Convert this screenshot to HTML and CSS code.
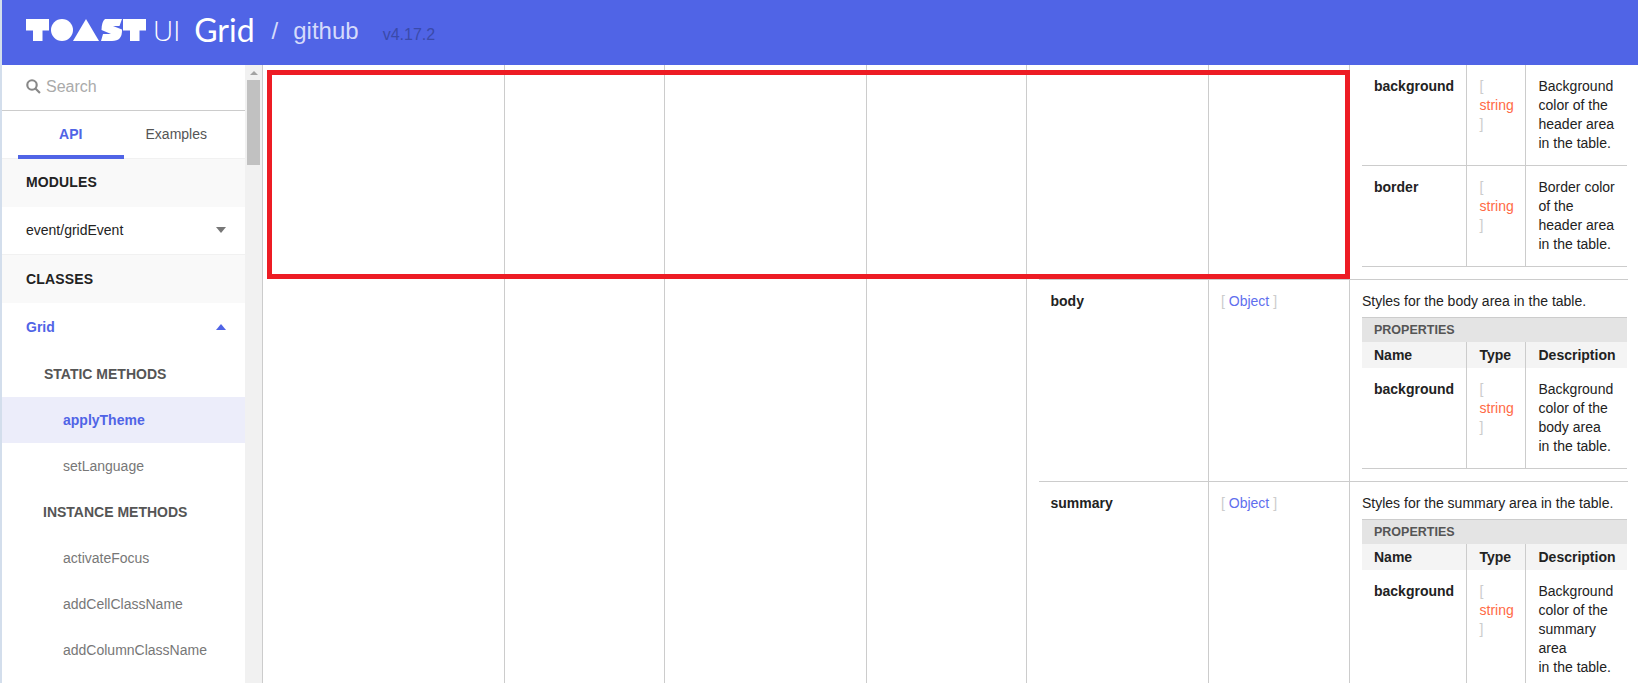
FILE: index.html
```html
<!DOCTYPE html>
<html lang="en">
<head>
<meta charset="utf-8">
<title>TOAST UI Grid</title>
<link rel="stylesheet" href="styles.css">
</head>
<body>
<div class="page">
  <header class="topbar">
    <svg class="logo" viewBox="0 0 120 22" aria-label="TOAST"><path d="M0 0H23V11.500H16.500V22H7V11.500H0Z"/><circle cx="36" cy="11" r="11"/><path d="M47 22L60 0L73 22Z"/><path d="M79 0H96L93.500 7H87L96 10.500Q96.500 22 86 22H75L77 15H85L75.500 11Q75.500 3 79 0Z"/><path d="M97 0H120V11.500H113.500V22H104V11.500H97Z"/></svg>
    <span class="ui">UI</span>
    <span class="grid-name">Grid</span>
    <span class="slash">/</span>
    <span class="repo">github</span>
    <span class="version">v4.17.2</span>
  </header>
  <div class="body">
    <aside class="sidebar">
      <div class="side-panel">
        <div class="search">
          <svg class="search-icon" viewBox="0 0 14 14"><circle cx="5.600" cy="5.600" r="4.400"/><path d="M8.800 8.800L13 13"/></svg>
          <span>Search</span>
        </div>
        <nav class="tabs"><span class="tab active">API</span><span class="tab">Examples</span></nav>
        <div class="section">MODULES</div>
        <div class="module">event/gridEvent<i class="caret down"></i></div>
        <div class="section">CLASSES</div>
        <div class="module current">Grid<i class="caret up"></i></div>
        <div class="group first">STATIC METHODS</div>
        <div class="method selected">applyTheme</div>
        <div class="method">setLanguage</div>
        <div class="group">INSTANCE METHODS</div>
        <div class="method">activateFocus</div>
        <div class="method">addCellClassName</div>
        <div class="method">addColumnClassName</div>
      </div>
      <div class="scrollbar"><span class="arrow"></span><span class="thumb"></span></div>
    </aside>
    <main class="content">
      <div class="highlight"></div>
      <table class="outer">
        <colgroup><col class="c1"><col class="c2"><col class="c3"><col class="c4"><col></colgroup>
        <tr>
          <td></td><td></td><td></td><td></td>
          <td class="wrap">
            <table class="params">
              <colgroup><col class="p-name"><col class="p-type"><col></colgroup>
              <tr class="top-row">
                <td></td><td></td>
                <td class="desc">
                  <table class="props">
                    <colgroup><col class="i-name"><col class="i-type"><col></colgroup>
                    <tr><td class="name">background</td><td class="type"><span class="br">[</span> <span class="str">string</span> <span class="br">]</span></td><td>Background color of the header area<br>in the table.</td></tr>
                    <tr><td class="name">border</td><td class="type"><span class="br">[</span> <span class="str">string</span> <span class="br">]</span></td><td>Border color of the<br>header area<br>in the table.</td></tr>
                  </table>
                </td>
              </tr>
              <tr class="body-row">
                <td class="name">body</td>
                <td class="obj"><span class="br">[</span> <span class="link">Object</span> <span class="br">]</span></td>
                <td class="desc">
                  <p>Styles for the body area in the table.</p>
                  <table class="props">
                    <colgroup><col class="i-name"><col class="i-type"><col></colgroup>
                    <tr class="caption"><th colspan="3">PROPERTIES</th></tr>
                    <tr class="head"><th>Name</th><th>Type</th><th>Description</th></tr>
                    <tr><td class="name">background</td><td class="type"><span class="br">[</span> <span class="str">string</span> <span class="br">]</span></td><td>Background color of the body area<br>in the table.</td></tr>
                  </table>
                </td>
              </tr>
              <tr class="body-row">
                <td class="name">summary</td>
                <td class="obj"><span class="br">[</span> <span class="link">Object</span> <span class="br">]</span></td>
                <td class="desc">
                  <p>Styles for the summary area in the table.</p>
                  <table class="props">
                    <colgroup><col class="i-name"><col class="i-type"><col></colgroup>
                    <tr class="caption"><th colspan="3">PROPERTIES</th></tr>
                    <tr class="head"><th>Name</th><th>Type</th><th>Description</th></tr>
                    <tr><td class="name">background</td><td class="type"><span class="br">[</span> <span class="str">string</span> <span class="br">]</span></td><td>Background color of the summary area<br>in the table.</td></tr>
                  </table>
                </td>
              </tr>
            </table>
          </td>
        </tr>
      </table>
    </main>
  </div>
</div>
</body>
</html>
```
FILE: styles.css
```css
* { box-sizing: border-box; }
html, body { margin: 0; height: 100%; overflow: hidden; }
body { font-family: "Liberation Sans", Arial, sans-serif; font-size: 14px; color: #222; background: #fff; }
.page { height: 683px; border-left: 2px solid #d3deec; display: flex; flex-direction: column; }

.topbar { height: 65px; flex: none; background: #5064e6; display: flex; align-items: center; padding-left: 24px; color: #fff; }
.logo { width: 120px; height: 22px; fill: #fff; flex: none; margin-top: -5px; }
.ui { font-family: "Open Sans", sans-serif; font-weight: 300; font-size: 28px; margin-left: 7px; margin-top: -5px; }
.grid-name { font-family: Lato, sans-serif; font-size: 32px; margin-left: 14px; margin-top: -6px; }
.slash { font-size: 24px; color: #d5dbfb; margin-left: 17px; margin-top: -3px; }
.repo { font-size: 24px; color: #d5dbfb; margin-left: 15px; margin-top: -3px; }
.version { font-size: 16px; color: #3a4aaa; margin-left: 24px; margin-top: 5px; }

.body { flex: 1; min-height: 0; display: flex; }
.sidebar { width: 261px; flex: none; display: flex; border-right: 1px solid #ccc; overflow: hidden; }
.side-panel { width: 243px; flex: none; }
.scrollbar { width: 17px; background: #f1f1f1; display: flex; flex-direction: column; align-items: center; flex: none; padding: 0 2px; }
.arrow { width: 0; height: 0; margin-top: 6px; border: 4px solid transparent; border-top: 0; border-bottom: 4px solid #a3a3a3; }
.thumb { width: 13px; height: 85px; background: #c1c1c1; margin-top: 5px; }

.search { height: 46px; border-bottom: 1px solid #ccc; display: flex; align-items: center; padding: 0 0 2px 24px; font-size: 16px; color: #aaa; gap: 5px; }
.search-icon { width: 15px; height: 15px; fill: none; stroke: #888; stroke-width: 2; flex: none; }
.tabs { height: 48px; display: flex; padding: 0 16px; border-bottom: 1px solid #f1f1f1; }
.tab { width: 106px; display: flex; align-items: center; justify-content: center; color: #555; padding-bottom: 2px; }
.tab.active { color: #5064e6; font-weight: bold; border-bottom: 4px solid #5064e6; padding: 1px 0 0; margin-bottom: -1px; }
.section { height: 48px; background: #f9f9f9; display: flex; align-items: center; padding: 0 0 1px 24px; font-weight: bold; font-size: 14px; letter-spacing: .15px; color: #222; }
.tabs + .section { padding-bottom: 2px; }
.module { height: 48px; display: flex; align-items: center; justify-content: space-between; padding: 0 19px 2px 24px; color: #222; border-bottom: 1px solid #f1f1f1; }
.module.current { border-bottom: 0; color: #5064e6; font-weight: bold; height: 47px; padding-bottom: 0; }
.caret { width: 0; height: 0; border: 5px solid transparent; }
.caret.down { border-top: 6px solid #777; border-bottom: 0; }
.caret.up { border-bottom: 6px solid #5064e6; border-top: 0; }
.group { height: 46px; display: flex; align-items: center; padding-left: 41px; font-weight: bold; font-size: 14px; color: #555; }
.group.first { padding: 1px 0 0 42px; height: 47px; }
.method { height: 46px; display: flex; align-items: center; padding-left: 61px; color: #777; }
.method.selected { background: #ecedfa; color: #5064e6; font-weight: bold; }

.content { flex: 1; min-width: 0; position: relative; overflow: hidden; }
.highlight { position: absolute; left: 4px; top: 5px; width: 1083px; height: 209px; border: 5px solid #ed1c24; z-index: 1; }

table { border-collapse: collapse; table-layout: fixed; }
td, th { padding: 0; vertical-align: top; text-align: left; }
.outer { width: 1375px; height: 618px; }
.c1 { width: 241px; } .c2 { width: 160px; } .c3 { width: 202px; } .c4 { width: 160px; }
.outer > tbody > tr > td { border-right: 1px solid #ccc; }
.outer > tbody > tr > td:last-child { border-right: 0; }
.wrap { padding: 0 11px 0 12px; }
.params { width: 589px; }
.p-name { width: 170px; } .p-type { width: 141px; }
.top-row > td { height: 214px; }
.params > tbody > tr > td { border-right: 1px solid #ccc; border-bottom: 1px solid #ccc; }
.params > tbody > tr > td:last-child { border-right: 0; }
.params > tbody > tr:last-child > td { border-bottom: 0; }
.params .desc { padding: 0 0 12px 12px; }
.body-row > td { line-height: 19px; }
.body-row > .name, .body-row > .obj { padding-top: 12px; }
.body-row > .name { padding-left: 12px; }
.body-row > .obj { padding-left: 12px; }
.body-row .desc { padding-top: 12px; }
.desc p { margin: 0 0 6px; line-height: 19px; }
.name { font-weight: bold; }
.obj { color: #5064e6; }
.br { color: #ccc; }
.link { color: #5f6fee; }
.str { color: #ff6a45; }

.props { width: 265px; line-height: 19px; }
.i-name { width: 104px; } .i-type { width: 59px; }
.props td { padding: 12px 6px 12px 13px; border-bottom: 1px solid #ccc; border-right: 1px solid #ccc; }
.props td:last-child { border-right: 0; }
.props .type { padding-right: 8px; }
.props td.name { padding-left: 12px; }
.caption th { height: 24px; background: #e4e4e4; border-top: 1px solid #ccc; color: #555; font-size: 12.5px; padding-left: 12px; line-height: 24px; }
.head th { height: 26px; background: #f4f4f4; padding-left: 13px; line-height: 26px; border-right: 1px solid #ccc; }
.head th:first-child { padding-left: 12px; }
.head th:last-child { border-right: 0; }
```
